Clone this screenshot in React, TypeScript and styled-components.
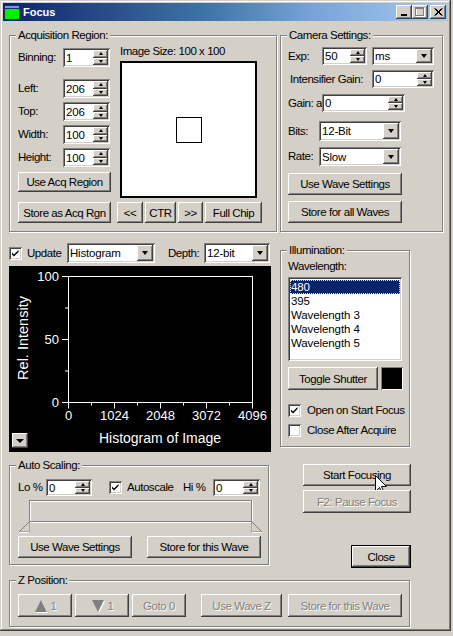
import React from "react";
import styled, { createGlobalStyle, css } from "styled-components";

const FACE = "#d4d0c8";
const SHADOW = "#808080";
const DARK = "#404040";

const raised = css`
  box-shadow: inset -1px -1px ${DARK}, inset 1px 1px #fff, inset -2px -2px ${SHADOW},
    inset 2px 2px ${FACE};
`;
const sunken = css`
  box-shadow: inset 1px 1px ${SHADOW}, inset -1px -1px #fff, inset 2px 2px ${DARK},
    inset -2px -2px ${FACE};
`;

const GlobalStyle = createGlobalStyle`
  html, body { margin: 0; padding: 0; background: ${FACE}; }
  body {
    font-family: "Liberation Sans", Arial, sans-serif;
    font-size: 11.5px;
    letter-spacing: -0.45px;
    color: #000;
  }
  *, *::before, *::after { box-sizing: border-box; }
`;

const Window = styled.div`
  width: 451px;
  height: 631px;
  padding: 3px;
  background: ${FACE};
  box-shadow: inset -1px -1px ${DARK}, inset 1px 1px ${FACE}, inset -2px -2px ${SHADOW},
    inset 2px 2px #fff;
  display: flex;
  flex-direction: column;
`;

const TitleBar = styled.div`
  height: 18px;
  flex-shrink: 0;
  display: flex;
  align-items: center;
  padding: 0 2px 0 1px;
  background: linear-gradient(90deg, #0a246a 0%, #2c4f8c 25%, #3c74a4 45%, #7aa4d8 70%, #a6caf0 100%);
`;

const TitleText = styled.span`
  margin-left: 3px;
  color: #fff;
  font-weight: bold;
  font-size: 11px;
  letter-spacing: 0;
`;

const CaptionGroup = styled.div`
  margin-left: auto;
  display: flex;
`;

const CaptionButton = styled.div<{ $gap?: number }>`
  width: 16px;
  height: 14px;
  margin-left: ${(p) => p.$gap ?? 0}px;
  background: ${FACE};
  ${raised}
  display: flex;
  align-items: center;
  justify-content: center;
`;

const Body = styled.div`
  display: flex;
  flex-direction: column;
  padding-left: 6px;
`;

const Row = styled.div<{ $mt: number }>`
  display: flex;
  align-items: flex-start;
  margin-top: ${(p) => p.$mt}px;
`;

const Stack = styled.div<{ $mt?: number; $ml?: number; $w?: number }>`
  display: flex;
  flex-direction: column;
  align-items: flex-start;
  flex-shrink: 0;
  margin-top: ${(p) => p.$mt ?? 0}px;
  margin-left: ${(p) => p.$ml ?? 0}px;
  ${(p) => (p.$w ? `width: ${p.$w}px;` : "")}
`;

const Group = styled.div<{
  $w: number;
  $h: number;
  $mt?: number;
  $ml?: number;
  $pt: number;
  $pl: number;
}>`
  position: relative;
  flex-shrink: 0;
  width: ${(p) => p.$w}px;
  height: ${(p) => p.$h}px;
  margin-top: ${(p) => p.$mt ?? 0}px;
  margin-left: ${(p) => p.$ml ?? 0}px;
  padding: ${(p) => p.$pt}px 0 0 ${(p) => p.$pl}px;
  border: 1px solid ${SHADOW};
  box-shadow: inset 1px 1px #fff, 1px 1px #fff;
`;

const GroupLabel = styled.span`
  position: absolute;
  top: -7px;
  left: 6px;
  padding: 0 2px;
  background: ${FACE};
  line-height: 13px;
  white-space: nowrap;
`;

const FieldRow = styled.div<{ $mt?: number; $h: number }>`
  display: flex;
  align-items: center;
  flex-shrink: 0;
  height: ${(p) => p.$h}px;
  margin-top: ${(p) => p.$mt ?? 0}px;
`;

const Label = styled.span<{ $w?: number; $ml?: number }>`
  flex-shrink: 0;
  white-space: nowrap;
  overflow: hidden;
  line-height: 13px;
  margin-left: ${(p) => p.$ml ?? 0}px;
  ${(p) => (p.$w ? `width: ${p.$w}px;` : "")}
`;

const TextLine = styled.div<{ $ml?: number }>`
  line-height: 13px;
  white-space: nowrap;
  margin-left: ${(p) => p.$ml ?? 0}px;
`;

const Field = styled.div<{ $w: number; $h: number; $ml?: number }>`
  width: ${(p) => p.$w}px;
  height: ${(p) => p.$h}px;
  margin-left: ${(p) => p.$ml ?? 0}px;
  flex-shrink: 0;
  display: flex;
  padding: 2px;
  background: #fff;
  ${sunken}
`;

const FieldValue = styled.span`
  flex: 1;
  min-width: 0;
  padding-left: 1px;
  display: flex;
  align-items: center;
  white-space: nowrap;
  overflow: hidden;
  letter-spacing: -0.2px;
`;

const SpinCol = styled.div`
  width: 15px;
  flex-shrink: 0;
  display: flex;
  flex-direction: column;
`;

const SpinButton = styled.div<{ $dir: "up" | "down" }>`
  flex: 1;
  background: ${FACE};
  ${raised}
  display: flex;
  align-items: center;
  justify-content: center;
  &::after {
    content: "";
    border-left: 2.5px solid transparent;
    border-right: 2.5px solid transparent;
    ${(p) =>
      p.$dir === "up" ? "border-bottom: 3px solid #000;" : "border-top: 3px solid #000;"}
  }
`;

const DropButton = styled.div`
  width: 16px;
  flex-shrink: 0;
  background: ${FACE};
  ${raised}
  display: flex;
  align-items: center;
  justify-content: center;
  &::after {
    content: "";
    border-left: 3.5px solid transparent;
    border-right: 3.5px solid transparent;
    border-top: 4px solid #000;
  }
`;

const Btn = styled.button<{
  $w: number;
  $h: number;
  $ml?: number;
  $mt?: number;
  $off?: boolean;
  $default?: boolean;
}>`
  position: relative;
  flex-shrink: 0;
  width: ${(p) => p.$w}px;
  height: ${(p) => p.$h}px;
  margin: ${(p) => p.$mt ?? 0}px 0 0 ${(p) => p.$ml ?? 0}px;
  padding: 0;
  border: 0;
  background: ${FACE};
  font: inherit;
  letter-spacing: inherit;
  color: #000;
  display: flex;
  align-items: center;
  justify-content: center;
  white-space: nowrap;
  ${raised}
  ${(p) =>
    p.$off &&
    css`
      color: ${SHADOW};
      text-shadow: 1px 1px #fff;
    `}
  ${(p) =>
    p.$default &&
    css`
      box-shadow: inset 0 0 0 1px #000, inset -2px -2px ${DARK}, inset 2px 2px #fff,
        inset -3px -3px ${SHADOW};
    `}
`;

const CheckBox = styled.div<{ $ml?: number }>`
  width: 13px;
  height: 13px;
  flex-shrink: 0;
  margin-left: ${(p) => p.$ml ?? 0}px;
  background: #fff;
  ${sunken}
  display: flex;
  align-items: center;
  justify-content: center;
`;

const AcqGrid = styled.div`
  display: grid;
  grid-template-columns: 93px 144px;
  grid-template-rows: 153px 21px;
  column-gap: 6px;
  row-gap: 4px;
`;

const Preview = styled.div`
  width: 137px;
  height: 137px;
  margin: 3px 0 0 3px;
  background: #fff;
  border: 2px solid #000;
  display: flex;
  align-items: center;
  justify-content: center;
`;

const RoiBox = styled.div`
  width: 26px;
  height: 26px;
  border: 1px solid #000;
`;

const ButtonStrip = styled.div<{ $gap: number }>`
  display: flex;
  gap: ${(p) => p.$gap}px;
`;

const HistPanel = styled.div`
  position: relative;
  width: 262px;
  height: 186px;
  margin-top: 3px;
  background: #000;
  letter-spacing: 0;
  svg text {
    font-family: "Liberation Sans", Arial, sans-serif;
  }
`;

const CornerButton = styled.div`
  position: absolute;
  left: 3px;
  top: 167px;
  width: 16px;
  height: 15px;
  background: ${FACE};
  ${raised}
  display: flex;
  align-items: center;
  justify-content: center;
  &::after {
    content: "";
    border-left: 4px solid transparent;
    border-right: 4px solid transparent;
    border-top: 4px solid #000;
  }
`;

const ListBox = styled.div`
  width: 114px;
  height: 84px;
  margin-top: 4px;
  padding: 3px 2px 0 2px;
  background: #fff;
  ${sunken}
  display: flex;
  flex-direction: column;
`;

const ListItem = styled.div<{ $selected?: boolean }>`
  height: 14px;
  line-height: 14px;
  padding-left: 1px;
  white-space: nowrap;
  letter-spacing: -0.1px;
  ${(p) =>
    p.$selected &&
    css`
      background: #0a246a;
      color: #fff;
      outline: 1px dotted #e8e4a8;
      outline-offset: -1px;
    `}
`;

const Swatch = styled.div`
  width: 22px;
  height: 23px;
  margin-left: 3px;
  flex-shrink: 0;
  background: #000;
  box-shadow: inset 1px 1px ${SHADOW}, inset -1px -1px #fff;
`;

const Cursor = styled.svg`
  position: absolute;
  left: 72px;
  top: 11px;
  pointer-events: none;
`;

const Check = () => (
  <svg width="9" height="9" viewBox="0 0 9 9">
    <path d="M1 3.5 L3 5.5 L7.5 1 L7.5 3 L3 7.5 L1 5.5 Z" fill="#000" />
  </svg>
);

const Spin = ({ w, h, value, ml }: { w: number; h: number; value: string; ml?: number }) => (
  <Field $w={w} $h={h} $ml={ml}>
    <FieldValue>{value}</FieldValue>
    <SpinCol>
      <SpinButton $dir="up" />
      <SpinButton $dir="down" />
    </SpinCol>
  </Field>
);

const Combo = ({ w, h, value, ml }: { w: number; h: number; value: string; ml?: number }) => (
  <Field $w={w} $h={h} $ml={ml}>
    <FieldValue>{value}</FieldValue>
    <DropButton />
  </Field>
);

const TitleIcon = () => (
  <svg width="16" height="15" viewBox="0 0 16 15">
    <rect x="0" y="0" width="16" height="15" fill="#1c2c6c" />
    <rect x="1" y="1" width="14" height="2" fill="#6c9ce4" />
    <rect x="1" y="4" width="14" height="10" fill="#00f000" />
  </svg>
);

const Triangle = ({ up }: { up: boolean }) => (
  <svg width="14" height="14" viewBox="0 0 14 14">
    {up ? (
      <>
        <path d="M7 1 L13 13 L1 13 Z" fill="#fff" transform="translate(1 1)" />
        <path d="M7 1 L13 13 L1 13 Z" fill={SHADOW} />
      </>
    ) : (
      <>
        <path d="M1 1 L13 1 L7 13 Z" fill="#fff" transform="translate(1 1)" />
        <path d="M1 1 L13 1 L7 13 Z" fill={SHADOW} />
      </>
    )}
  </svg>
);

const Histogram = () => {
  const left = 59.5;
  const right = 243.5;
  const top = 10.5;
  const bottom = 136.5;
  const yTicks = [0, 25, 50, 75, 100];
  const xTicks = Array.from({ length: 9 }, (_, i) => i);
  return (
    <HistPanel>
      <svg width="262" height="186" viewBox="0 0 262 186">
        <rect
          x={left}
          y={top}
          width={right - left}
          height={bottom - top}
          fill="none"
          stroke="#fff"
          strokeWidth="1"
        />
        {yTicks.map((v) => {
          const y = bottom - (v / 100) * (bottom - top);
          const major = v % 50 === 0;
          return (
            <g key={v}>
              <line x1={major ? 53 : 56} x2={left} y1={y} y2={y} stroke="#fff" />
              {major && (
                <text x="50" y={y + 4.5} fill="#fff" fontSize="13" textAnchor="end">
                  {v}
                </text>
              )}
            </g>
          );
        })}
        {xTicks.map((i) => {
          const x = left + i * 23;
          const major = i % 2 === 0;
          return (
            <g key={i}>
              <line x1={x} x2={x} y1={bottom} y2={bottom + (major ? 6 : 3)} stroke="#fff" />
              {major && (
                <text x={x} y="154" fill="#fff" fontSize="13" textAnchor="middle">
                  {i * 512}
                </text>
              )}
            </g>
          );
        })}
        <text
          transform="translate(18.5 72) rotate(-90)"
          fill="#fff"
          fontSize="14.5"
          textAnchor="middle"
        >
          Rel. Intensity
        </text>
        <text x="151" y="177" fill="#fff" fontSize="14" textAnchor="middle">
          Histogram of Image
        </text>
      </svg>
      <CornerButton />
    </HistPanel>
  );
};

const Slider = () => (
  <svg width="245" height="33" viewBox="0 0 245 33" style={{ display: "block", marginTop: 4 }}>
    <line x1="11" x2="234" y1="0.5" y2="0.5" stroke={SHADOW} />
    <line x1="12" x2="233" y1="1.5" y2="1.5" stroke="#fff" />
    <line x1="11.5" x2="11.5" y1="0" y2="32" stroke={SHADOW} />
    <line x1="12.5" x2="12.5" y1="1" y2="21" stroke="#fff" />
    <line x1="233.5" x2="233.5" y1="0" y2="32" stroke={SHADOW} />
    <line x1="234.5" x2="234.5" y1="0" y2="21" stroke="#fff" />
    <line x1="11" x2="234" y1="21.5" y2="21.5" stroke={SHADOW} />
    <line x1="12" x2="233" y1="22.5" y2="22.5" stroke="#fff" />
    <path d="M11.5 21.5 L1 32 L11.5 32" fill={FACE} stroke={SHADOW} />
    <path d="M233.5 21.5 L244 32 L233.5 32" fill={FACE} stroke={SHADOW} />
    <line x1="1" x2="11" y1="32.5" y2="32.5" stroke="#fff" />
    <line x1="234" x2="244" y1="32.5" y2="32.5" stroke="#fff" />
  </svg>
);

export default function App() {
  return (
    <>
      <GlobalStyle />
      <Window>
        <TitleBar>
          <TitleIcon />
          <TitleText>Focus</TitleText>
          <CaptionGroup>
            <CaptionButton>
              <svg width="8" height="8" viewBox="0 0 8 8">
                <rect x="1" y="6" width="6" height="2" fill="#000" />
              </svg>
            </CaptionButton>
            <CaptionButton>
              <svg width="10" height="10" viewBox="0 0 10 10">
                <rect x="1.5" y="1.5" width="8" height="8" fill="none" stroke="#fff" />
                <rect x="0.5" y="0.5" width="8" height="8" fill="none" stroke={SHADOW} />
                <line x1="0" x2="9" y1="1.5" y2="1.5" stroke={SHADOW} />
              </svg>
            </CaptionButton>
            <CaptionButton $gap={2}>
              <svg width="9" height="8" viewBox="0 0 9 8">
                <path d="M0.5 0.5 L7.5 7.5 M1.5 0.5 L8.5 7.5 M7.5 0.5 L0.5 7.5 M8.5 0.5 L1.5 7.5" stroke="#000" />
              </svg>
            </CaptionButton>
          </CaptionGroup>
        </TitleBar>

        <Body>
          <Row $mt={14}>
            <Group $w={268} $h={197} $pt={9} $pl={8}>
              <GroupLabel>Acquisition Region:</GroupLabel>
              <AcqGrid>
                <Stack>
                  <FieldRow $h={19} $mt={3}>
                    <Label $w={45}>Binning:</Label>
                    <Spin w={47} h={19} value="1" />
                  </FieldRow>
                  <FieldRow $h={19} $mt={12}>
                    <Label $w={45}>Left:</Label>
                    <Spin w={47} h={19} value="206" />
                  </FieldRow>
                  <FieldRow $h={19} $mt={4}>
                    <Label $w={45}>Top:</Label>
                    <Spin w={47} h={19} value="206" />
                  </FieldRow>
                  <FieldRow $h={19} $mt={4}>
                    <Label $w={45}>Width:</Label>
                    <Spin w={47} h={19} value="100" />
                  </FieldRow>
                  <FieldRow $h={19} $mt={4}>
                    <Label $w={45}>Height:</Label>
                    <Spin w={47} h={19} value="100" />
                  </FieldRow>
                  <Btn $w={93} $h={20} $mt={5}>
                    Use Acq Region
                  </Btn>
                </Stack>
                <Stack>
                  <TextLine $ml={3}>Image Size: 100 x 100</TextLine>
                  <Preview>
                    <RoiBox />
                  </Preview>
                </Stack>
                <Btn $w={93} $h={21}>
                  Store as Acq Rgn
                </Btn>
                <ButtonStrip $gap={2}>
                  <Btn $w={26} $h={21}>
                    {"<<"}
                  </Btn>
                  <Btn $w={31} $h={21}>
                    CTR
                  </Btn>
                  <Btn $w={25} $h={21}>
                    {">>"}
                  </Btn>
                  <Btn $w={57} $h={21}>
                    Full Chip
                  </Btn>
                </ButtonStrip>
              </AcqGrid>
            </Group>

            <Group $w={163} $h={197} $ml={3} $pt={11} $pl={7}>
              <GroupLabel>Camera Settings:</GroupLabel>
              <Stack>
                <FieldRow $h={18}>
                  <Label $w={34}>Exp:</Label>
                  <Spin w={45} h={18} value="50" />
                  <Combo w={62} h={18} value="ms" ml={5} />
                </FieldRow>
                <FieldRow $h={18} $mt={5}>
                  <Label $w={82} $ml={2}>
                    Intensifier Gain:
                  </Label>
                  <Spin w={62} h={18} value="0" />
                </FieldRow>
                <FieldRow $h={18} $mt={6}>
                  <Label $w={34}>Gain: a</Label>
                  <Spin w={83} h={18} value="0" />
                </FieldRow>
                <FieldRow $h={20} $mt={9}>
                  <Label $w={31}>Bits:</Label>
                  <Combo w={82} h={20} value="12-Bit" />
                </FieldRow>
                <FieldRow $h={19} $mt={6}>
                  <Label $w={31}>Rate:</Label>
                  <Combo w={82} h={19} value="Slow" />
                </FieldRow>
                <Btn $w={114} $h={22} $mt={7}>
                  Use Wave Settings
                </Btn>
                <Btn $w={114} $h={22} $mt={6}>
                  Store for all Waves
                </Btn>
              </Stack>
            </Group>
          </Row>

          <Row $mt={11}>
            <Stack $w={262}>
              <FieldRow $h={20}>
                <CheckBox>
                  <Check />
                </CheckBox>
                <Label $w={40} $ml={5}>
                  Update
                </Label>
                <Combo w={88} h={20} value="Histogram" />
                <Label $w={36} $ml={13}>
                  Depth:
                </Label>
                <Combo w={66} h={20} value="12-bit" />
              </FieldRow>
              <Histogram />
            </Stack>

            <Group $w={130} $h={197} $mt={7} $ml={9} $pt={9} $pl={7}>
              <GroupLabel>Illumination:</GroupLabel>
              <Stack>
                <TextLine>Wavelength:</TextLine>
                <ListBox>
                  <ListItem $selected>480</ListItem>
                  <ListItem>395</ListItem>
                  <ListItem>Wavelength 3</ListItem>
                  <ListItem>Wavelength 4</ListItem>
                  <ListItem>Wavelength 5</ListItem>
                </ListBox>
                <FieldRow $h={23} $mt={6}>
                  <Btn $w={90} $h={23}>
                    Toggle Shutter
                  </Btn>
                  <Swatch />
                </FieldRow>
                <FieldRow $h={13} $mt={14}>
                  <CheckBox>
                    <Check />
                  </CheckBox>
                  <Label $ml={6}>Open on Start Focus</Label>
                </FieldRow>
                <FieldRow $h={13} $mt={7}>
                  <CheckBox />
                  <Label $ml={6}>Close After Acquire</Label>
                </FieldRow>
              </Stack>
            </Group>
          </Row>

          <Row $mt={12}>
            <Group $w={260} $h={100} $mt={1} $pt={13} $pl={8}>
              <GroupLabel>Auto Scaling:</GroupLabel>
              <Stack>
                <FieldRow $h={17}>
                  <Label $w={28}>Lo %</Label>
                  <Spin w={46} h={17} value="0" />
                  <CheckBox $ml={17}>
                    <Check />
                  </CheckBox>
                  <Label $w={56} $ml={5}>
                    Autoscale
                  </Label>
                  <Label $w={30}>Hi %</Label>
                  <Spin w={47} h={17} value="0" />
                </FieldRow>
                <Slider />
                <FieldRow $h={22} $mt={3}>
                  <Btn $w={114} $h={22}>
                    Use Wave Settings
                  </Btn>
                  <Btn $w={114} $h={22} $ml={15}>
                    Store for this Wave
                  </Btn>
                </FieldRow>
              </Stack>
            </Group>

            <Stack $ml={34}>
              <Btn $w={108} $h={22}>
                Start Focusing
                <Cursor width="13" height="21" viewBox="0 0 13 21">
                  <path
                    d="M0.5 0.5 L0.5 16.5 L4.5 12.5 L7.5 19.5 L9.5 18.5 L6.5 11.5 L11.5 11.5 Z"
                    fill="#fff"
                    stroke="#000"
                  />
                </Cursor>
              </Btn>
              <Btn $w={108} $h={23} $mt={4} $off>
                F2: Pause Focus
              </Btn>
              <Btn $w={60} $h={23} $mt={32} $ml={48} $default>
                Close
              </Btn>
            </Stack>
          </Row>

          <Row $mt={12}>
            <Group $w={401} $h={47} $pt={13} $pl={8}>
              <GroupLabel>Z Position:</GroupLabel>
              <FieldRow $h={23}>
                <Btn $w={54} $h={23} $off>
                  <Triangle up />
                  <span style={{ marginLeft: 3 }}>1</span>
                </Btn>
                <Btn $w={54} $h={23} $ml={3} $off>
                  <Triangle up={false} />
                  <span style={{ marginLeft: 3 }}>1</span>
                </Btn>
                <Btn $w={54} $h={23} $ml={3} $off>
                  Goto 0
                </Btn>
                <Btn $w={81} $h={23} $ml={15} $off>
                  Use Wave Z
                </Btn>
                <Btn $w={114} $h={23} $ml={6} $off>
                  Store for this Wave
                </Btn>
              </FieldRow>
            </Group>
          </Row>
        </Body>
      </Window>
    </>
  );
}
